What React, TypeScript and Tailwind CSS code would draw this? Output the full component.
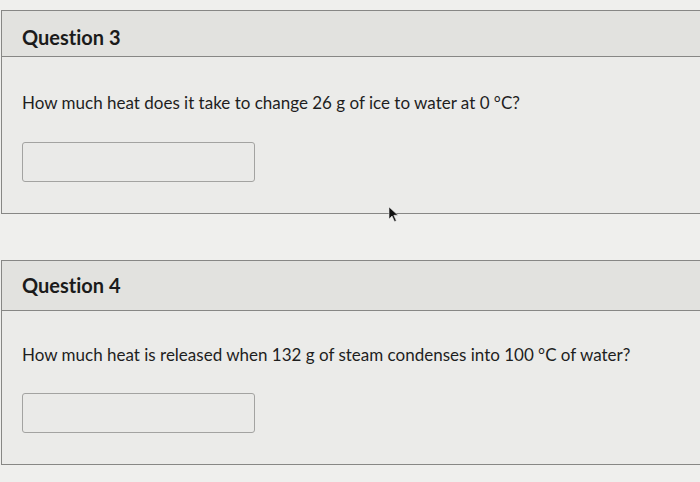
import React from 'react';

type QuestionProps = {
  title: string;
  text: string;
  headerPad: string;
  textGap: string;
  inputGap: string;
  headerH: string;
};

function Question({ title, text, headerPad, textGap, inputGap, headerH }: QuestionProps) {
  return (
    <section className="border-y border-l border-[#878785] bg-[#ebebe9]">
      <div className={`${headerH} ${headerPad} pl-[20px] bg-[#e2e2df] border-b border-[#878785]`}>
        <h2 className="text-[20px] leading-[24px] font-bold text-[#1b1b1b]">{title}</h2>
      </div>
      <div className={`pl-[20px] ${textGap} pb-[31px]`}>
        <p className="text-[17px] leading-[24px] text-[#1e1e1e]">{text}</p>
        <div className={`${inputGap} w-[233px] h-[40px] rounded-[3px] border border-[#a3a3a1] bg-[#eaeae8]`} />
      </div>
    </section>
  );
}

export default function App() {
  return (
    <div
      className="relative w-[700px] h-[482px] overflow-hidden bg-[#efefed] pt-[10px] pl-[1px] [font-variant-ligatures:none]"
      style={{ fontFamily: 'Lato, "Open Sans", sans-serif' }}
    >
      <Question
        title="Question 3"
        text="How much heat does it take to change 26 g of ice to water at 0 °C?"
        headerH="h-[46px]"
        headerPad="pt-[14px]"
        textGap="pt-[34px]"
        inputGap="mt-[27px]"
      />
      <div className="h-[46px]" />
      <Question
        title="Question 4"
        text="How much heat is released when 132 g of steam condenses into 100 °C of water?"
        headerH="h-[50px]"
        headerPad="pt-[12px]"
        textGap="pt-[32px]"
        inputGap="mt-[26px]"
      />

      {/* mouse pointer */}
      <svg className="absolute left-[388px] top-[206px]" width="11" height="17" viewBox="0 0 11 17">
        <path d="M1 1 L1 13 L4 10 L6.5 15.5 L8.3 14.7 L5.8 9.3 L10 9.3 Z" fill="#111" stroke="#e8e8e8" strokeWidth="0.6" />
      </svg>
    </div>
  );
}
